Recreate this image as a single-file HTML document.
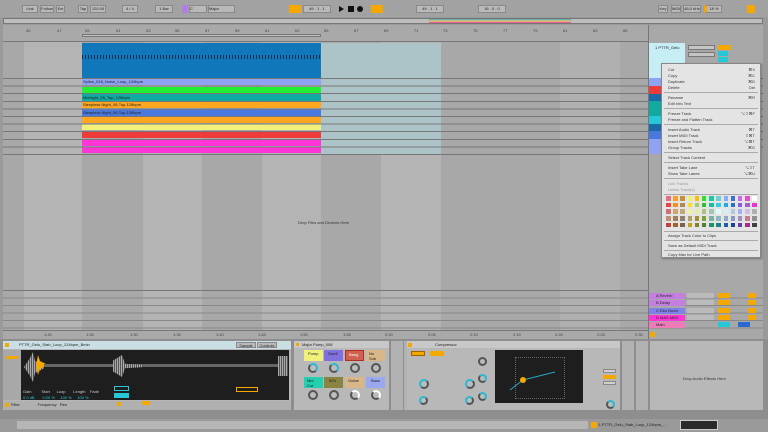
<!DOCTYPE html>
<html><head><meta charset="utf-8"><style>
*{margin:0;padding:0;box-sizing:border-box}
body{width:768px;height:432px;overflow:hidden;background:#9a9a9a;font-family:"Liberation Sans",sans-serif;font-size:4px;color:#222;position:relative}
.a{position:absolute}
.btn{position:absolute;background:#b9b9b9;border:1px solid #8a8a8a;font-size:4px;line-height:6px;text-align:center;height:8px}
.mi{position:absolute;left:6px;font-size:4px;color:#333}
.ms{position:absolute;right:5px;font-size:4px;color:#333}
.sep{position:absolute;left:2px;right:2px;height:1px;background:#aaa}
.knob{position:absolute;width:10px;height:10px;border-radius:50%;border:2px solid #555;background:#bcbcbc}
.kc{border-color:#2ab8d0 #2ab8d0 #555 #555}
.sw{display:grid;grid-template-columns:repeat(13,4.5px);column-gap:2.7px;row-gap:2.2px}
.sw i{display:block;width:4.5px;height:4.5px}
.wv{position:absolute;background:repeating-linear-gradient(90deg,#aaa 0 1px,#555 1px 2px)}
</style></head><body>
<div class="a" style="left:0;top:0;width:768px;height:17px;background:#a2a2a2"></div>
<div class="btn" style="left:22px;top:5px;width:16px">Link</div>
<div class="btn" style="left:40px;top:5px;width:14px">Follow</div>
<div class="btn" style="left:56px;top:5px;width:9px">Ext</div>
<div class="btn" style="left:78px;top:5px;width:10px">Tap</div>
<div class="btn" style="left:90px;top:5px;width:16px">120.00</div>
<div class="btn" style="left:122px;top:5px;width:16px">4 / 4</div>
<div class="btn" style="left:155px;top:5px;width:18px">1 Bar</div>
<div class="a" style="left:182px;top:5px;width:6px;height:8px;background:#b080e0"></div>
<div class="btn" style="left:189px;top:5px;width:18px;text-align:left">C</div>
<div class="btn" style="left:208px;top:5px;width:27px;text-align:left">Major</div>
<div class="a" style="left:289px;top:5px;width:12px;height:8px;background:#f5a800"></div>
<div class="btn" style="left:303px;top:5px;width:28px">49 . 1 . 1</div>
<div class="a" style="left:339px;top:6px;width:0;height:0;border-left:5px solid #111;border-top:3px solid transparent;border-bottom:3px solid transparent"></div>
<div class="a" style="left:348px;top:6px;width:6px;height:6px;background:#111"></div>
<div class="a" style="left:357px;top:6px;width:6px;height:6px;background:#111;border-radius:50%"></div>
<div class="a" style="left:371px;top:5px;width:12px;height:8px;background:#f5a800"></div>
<div class="btn" style="left:416px;top:5px;width:28px">49 . 1 . 1</div>
<div class="btn" style="left:478px;top:5px;width:28px">16 . 0 . 0</div>
<div class="btn" style="left:658px;top:5px;width:10px">Key</div>
<div class="btn" style="left:671px;top:5px;width:10px">MIDI</div>
<div class="btn" style="left:683px;top:5px;width:18px">48.0 kHz</div>
<div class="btn" style="left:704px;top:5px;width:18px;border-left:3px solid #f5a800">18 %</div>
<div class="a" style="left:747px;top:5px;width:8px;height:8px;background:#f5a800"></div>
<div class="a" style="left:3px;top:18px;width:760px;height:6px;background:#bdbdbd;border:1px solid #777"></div>
<div class="a" style="left:429px;top:19px;width:142px;height:4px;background:linear-gradient(#3aa0c0,#e8d070,#e040a0)"></div>
<div class="a" style="left:3px;top:25px;width:645px;height:307px;background:repeating-linear-gradient(90deg,#a8a8a8 0 21px,#b4b4b4 21px 79px,#a8a8a8 79px 140px,#b4b4b4 140px 199px,#a8a8a8 199px 259px,#b4b4b4 259px 318px,#a8a8a8 318px 378px,#b4b4b4 378px 438px,#a8a8a8 438px 557px,#b0b0b0 557px 617px,#a8a8a8 617px 645px)"></div>
<div class="a" style="left:3px;top:25px;width:645px;height:17px;background:#a9a9a9;border-bottom:1px solid #777"></div>
<div class="a" style="left:3px;top:28px;width:645px;font-size:4px;color:#444">
<span class="a" style="left:23px">45</span><span class="a" style="left:54px">47</span><span class="a" style="left:82px">49</span><span class="a" style="left:113px">51</span><span class="a" style="left:143px">53</span><span class="a" style="left:172px">55</span><span class="a" style="left:202px">57</span><span class="a" style="left:232px">59</span><span class="a" style="left:262px">61</span><span class="a" style="left:292px">63</span><span class="a" style="left:321px">65</span><span class="a" style="left:351px">67</span><span class="a" style="left:381px">69</span><span class="a" style="left:411px">71</span><span class="a" style="left:440px">73</span><span class="a" style="left:470px">75</span><span class="a" style="left:500px">77</span><span class="a" style="left:530px">79</span><span class="a" style="left:560px">81</span><span class="a" style="left:590px">83</span><span class="a" style="left:620px">85</span></div>
<div class="a" style="left:82px;top:34px;width:239px;height:3px;border:1px solid #777;background:#c0c0c0"></div>
<div class="a" style="left:321px;top:43px;width:120px;height:111px;background:#acc4c8"></div>
<div class="a" style="left:82px;top:43px;width:239px;height:35px;background:#1177bb"></div>
<div class="a" style="left:82px;top:55px;width:239px;height:4px;background:repeating-linear-gradient(90deg,#0a3050 0 1px,transparent 1px 3px)"></div>
<div class="a" style="left:82px;top:78px;width:239px;height:7px;background:#8fa3f2;font-size:4px;line-height:7px;padding-left:1px">Splice_018_Noise_Loop_124bpm</div>
<div class="a" style="left:82px;top:87px;width:239px;height:6px;background:#22ee33"></div>
<div class="a" style="left:82px;top:94px;width:239px;height:7px;background:#11aaa0;font-size:4px;line-height:7px;padding-left:1px">Midnight_05_Top_128bpm</div>
<div class="a" style="left:82px;top:101px;width:239px;height:7px;background:#ffa620;font-size:4px;line-height:7px;padding-left:1px">Sleepless Night_06-Top-128bpm</div>
<div class="a" style="left:82px;top:109px;width:239px;height:7px;background:#4a78dc;font-size:4px;line-height:7px;padding-left:1px">Sleepless Night_50-Top-128bpm</div>
<div class="a" style="left:82px;top:116px;width:239px;height:7px;background:#ffa620"></div>
<div class="a" style="left:82px;top:124px;width:239px;height:6px;background:#f2f27a"></div>
<div class="a" style="left:82px;top:131px;width:239px;height:7px;background:#ef3a3a"></div>
<div class="a" style="left:82px;top:139px;width:239px;height:7px;background:#ff35d8"></div>
<div class="a" style="left:82px;top:147px;width:239px;height:6px;background:#ff35d8"></div>
<div class="a" style="left:3px;top:78px;width:760px;height:76px;background:repeating-linear-gradient(#777 0 1px,transparent 1px 7.6px)"></div>
<div class="a" style="left:3px;top:154px;width:645px;height:1px;background:#777"></div>
<div class="a" style="left:298px;top:220px;font-size:4px;color:#333">Drop Files and Devices Here</div>
<div class="a" style="left:3px;top:290px;width:645px;height:1px;background:#777"></div>
<div class="a" style="left:3px;top:291px;width:645px;height:40px;background:repeating-linear-gradient(transparent 0 6.5px,#888 6.5px 7.5px)"></div>
<div class="a" style="left:3px;top:330px;width:645px;height:9px;background:#a9a9a9;border-top:1px solid #777"></div>
<div class="a" style="left:3px;top:332px;width:645px;font-size:4px;color:#444"><span class="a" style="left:41px">1:20</span><span class="a" style="left:83px">1:25</span><span class="a" style="left:127px">1:30</span><span class="a" style="left:170px">1:35</span><span class="a" style="left:213px">1:40</span><span class="a" style="left:255px">1:45</span><span class="a" style="left:297px">1:50</span><span class="a" style="left:340px">1:55</span><span class="a" style="left:382px">2:00</span><span class="a" style="left:425px">2:05</span><span class="a" style="left:467px">2:10</span><span class="a" style="left:510px">2:15</span><span class="a" style="left:552px">2:20</span><span class="a" style="left:594px">2:25</span><span class="a" style="left:632px">2:30</span></div>
<div class="a" style="left:648px;top:25px;width:115px;height:314px;background:#a8a8a8;border-left:1px solid #777"></div>
<div class="a" style="left:649px;top:78px;width:114px;height:76px;background:repeating-linear-gradient(#777 0 1px,transparent 1px 7.6px)"></div>
<div class="a" style="left:649px;top:291px;width:114px;height:40px;background:repeating-linear-gradient(transparent 0 6.5px,#888 6.5px 7.5px)"></div>
<div class="a" style="left:649px;top:43px;width:36px;height:35px;background:#c8eef5;font-size:4px;padding:2px 0 0 6px">1 PTTR_Gelu</div>
<div class="a" style="left:688px;top:45px;width:27px;height:5px;background:#c4c4c4;border:1px solid #777"></div>
<div class="a" style="left:688px;top:52px;width:27px;height:5px;background:#c4c4c4;border:1px solid #777"></div>
<div class="a" style="left:718px;top:45px;width:13px;height:5px;background:#f5a800"></div>
<div class="a" style="left:718px;top:51px;width:10px;height:5px;background:#26c8d8"></div>
<div class="a" style="left:718px;top:57px;width:10px;height:5px;background:#26c8d8"></div>
<div class="a" style="left:649px;top:78px;width:12px;height:76px;background:linear-gradient(#8fa3f2 0 8px,#ef3a3a 8px 16px,#1a6aa8 16px 23px,#11aaa0 23px 31px,#11aaa0 31px 38px,#26c8d8 38px 46px,#1a6aa8 46px 53px,#4a78dc 53px 61px,#8fa3f2 61px 69px,#8fa3f2 69px 76px)"></div>
<div class="a" style="left:649px;top:293px;width:36px;height:6px;background:#c47ee0;font-size:4px;padding-left:7px">A Reverb</div>
<div class="a" style="left:649px;top:300px;width:36px;height:6px;background:#c47ee0;font-size:4px;padding-left:7px">B Delay</div>
<div class="a" style="left:649px;top:308px;width:36px;height:6px;background:#8080ea;font-size:4px;padding-left:7px">C Eko Drum</div>
<div class="a" style="left:649px;top:315px;width:36px;height:6px;background:#ff35d8;font-size:4px;padding-left:7px">D MAX MIDI</div>
<div class="a" style="left:649px;top:322px;width:36px;height:6px;background:#ef7ab8;font-size:4px;padding-left:7px">Main</div>
<div class="a" style="left:687px;top:293px;width:27px;height:5px;background:#bbb"></div>
<div class="a" style="left:687px;top:300px;width:27px;height:5px;background:#bbb"></div>
<div class="a" style="left:687px;top:308px;width:27px;height:5px;background:#bbb"></div>
<div class="a" style="left:687px;top:315px;width:27px;height:5px;background:#bbb"></div>
<div class="a" style="left:718px;top:293px;width:12px;height:5px;background:#f5a800"></div>
<div class="a" style="left:718px;top:300px;width:12px;height:5px;background:#f5a800"></div>
<div class="a" style="left:718px;top:308px;width:12px;height:5px;background:#f5a800"></div>
<div class="a" style="left:718px;top:315px;width:12px;height:5px;background:#f5a800"></div>
<div class="a" style="left:718px;top:322px;width:12px;height:5px;background:#26c8d8"></div>
<div class="a" style="left:738px;top:322px;width:12px;height:5px;background:#2a6ad0"></div>
<div class="a" style="left:748px;top:293px;width:8px;height:5px;background:#f5a800"></div>
<div class="a" style="left:748px;top:300px;width:8px;height:5px;background:#f5a800"></div>
<div class="a" style="left:748px;top:308px;width:8px;height:5px;background:#f5a800"></div>
<div class="a" style="left:748px;top:315px;width:8px;height:5px;background:#f5a800"></div>
<div class="a" style="left:650px;top:332px;width:5px;height:5px;background:#f5a800"></div>
<div class="a" style="left:661px;top:63px;width:100px;height:195px;background:#e4e4e4;border:1px solid #888;box-shadow:1px 1px 2px rgba(0,0,0,.3)">
<div class="mi" style="top:3px">Cut</div><div class="ms" style="top:3px">⌘X</div>
<div class="mi" style="top:9px">Copy</div><div class="ms" style="top:9px">⌘C</div>
<div class="mi" style="top:15px">Duplicate</div><div class="ms" style="top:15px">⌘D</div>
<div class="mi" style="top:21px">Delete</div><div class="ms" style="top:21px">Del</div>
<div class="sep" style="top:28px"></div>
<div class="mi" style="top:31px">Rename</div><div class="ms" style="top:31px">⌘R</div>
<div class="mi" style="top:37px">Edit Info Text</div>
<div class="sep" style="top:44px"></div>
<div class="mi" style="top:47px">Freeze Track</div><div class="ms" style="top:47px">⌥⇧⌘F</div>
<div class="mi" style="top:53px">Freeze and Flatten Track</div>
<div class="sep" style="top:60px"></div>
<div class="mi" style="top:63px">Insert Audio Track</div><div class="ms" style="top:63px">⌘T</div>
<div class="mi" style="top:69px">Insert MIDI Track</div><div class="ms" style="top:69px">⇧⌘T</div>
<div class="mi" style="top:75px">Insert Return Track</div><div class="ms" style="top:75px">⌥⌘T</div>
<div class="mi" style="top:81px">Group Tracks</div><div class="ms" style="top:81px">⌘G</div>
<div class="sep" style="top:88px"></div>
<div class="mi" style="top:91px">Select Track Content</div>
<div class="sep" style="top:98px"></div>
<div class="mi" style="top:101px">Insert Take Lane</div><div class="ms" style="top:101px">⌥⇧T</div>
<div class="mi" style="top:107px">Show Take Lanes</div><div class="ms" style="top:107px">⌥⌘U</div>
<div class="sep" style="top:114px"></div>
<div class="mi" style="top:117px;color:#999">Link Tracks</div>
<div class="mi" style="top:123px;color:#999">Unlink Track(s)</div>
<div class="sep" style="top:130px"></div>
<div class="a sw" style="left:4px;top:132px">
<i style="background:#e07080"></i><i style="background:#f5a030"></i><i style="background:#c89030"></i><i style="background:#f0f070"></i><i style="background:#f5c000"></i><i style="background:#30e030"></i><i style="background:#20c8a0"></i><i style="background:#70d0d0"></i><i style="background:#80b0f0"></i><i style="background:#4070d0"></i><i style="background:#c070e0"></i><i style="background:#e050c0"></i><i style="background:#fff"></i>
<i style="background:#f04040"></i><i style="background:#f09020"></i><i style="background:#b08850"></i><i style="background:#f5e020"></i><i style="background:#a0d060"></i><i style="background:#30c030"></i><i style="background:#20b8a0"></i><i style="background:#30d0e0"></i><i style="background:#20a8e0"></i><i style="background:#3070c0"></i><i style="background:#8060e0"></i><i style="background:#a060d0"></i><i style="background:#f030d0"></i>
<i style="background:#d07070"></i><i style="background:#d0a070"></i><i style="background:#c0a870"></i><i style="background:#f0f0a0"></i><i style="background:#e0f0a0"></i><i style="background:#b0c080"></i><i style="background:#a0c8b0"></i><i style="background:#e0f8f8"></i><i style="background:#d0f0f8"></i><i style="background:#b0c8e0"></i><i style="background:#a0b0f0"></i><i style="background:#d0c0e0"></i><i style="background:#b0b0b0"></i>
<i style="background:#c09070"></i><i style="background:#a08060"></i><i style="background:#908070"></i><i style="background:#b0a070"></i><i style="background:#a09030"></i><i style="background:#80a040"></i><i style="background:#80b0a0"></i><i style="background:#90b8c0"></i><i style="background:#90a8c0"></i><i style="background:#8898c0"></i><i style="background:#a090c0"></i><i style="background:#c08090"></i><i style="background:#909090"></i>
<i style="background:#c04040"></i><i style="background:#a06030"></i><i style="background:#806050"></i><i style="background:#c0a020"></i><i style="background:#808030"></i><i style="background:#508030"></i><i style="background:#209070"></i><i style="background:#20808a"></i><i style="background:#2060a0"></i><i style="background:#204090"></i><i style="background:#6040a0"></i><i style="background:#a03080"></i><i style="background:#404040"></i>
</div>
<div class="sep" style="top:167px"></div>
<div class="mi" style="top:169px">Assign Track Color to Clips</div>
<div class="sep" style="top:176px"></div>
<div class="mi" style="top:179px">Save as Default MIDI Track</div>
<div class="sep" style="top:186px"></div>
<div class="mi" style="top:188px">Copy Max for Live Path</div>
</div>
<div class="a" style="left:0;top:339px;width:768px;height:81px;background:#8e8e8e"></div>
<div class="a" style="left:3px;top:341px;width:288px;height:69px;background:#b6b6b6"></div>
<div class="a" style="left:3px;top:341px;width:288px;height:8px;background:#c9dfe4;font-size:4px;line-height:8px;padding-left:16px">PTTR_Gelu_Stab_Loop_124bpm_Bmin</div>
<div class="a" style="left:5px;top:343px;width:4px;height:4px;background:#f5a800"></div>
<div class="a" style="left:236px;top:342px;width:20px;height:6px;background:#bbb;border:1px solid #888;font-size:4px;text-align:center">Sample</div>
<div class="a" style="left:257px;top:342px;width:20px;height:6px;background:#bbb;border:1px solid #888;font-size:4px;text-align:center">Controls</div>
<div class="a" style="left:3px;top:350px;width:18px;height:50px;background:#a8a8a8"></div>
<div class="a" style="left:6px;top:356px;width:12px;height:3px;background:#f5a800"></div>
<div class="a" style="left:21px;top:350px;width:268px;height:50px;background:#1e1e1e"></div>
<div class="wv" style="left:24px;top:352px;width:20px;height:30px;clip-path:polygon(0 50%,30% 20%,45% 0,55% 30%,100% 45%,100% 55%,55% 70%,45% 100%,30% 80%)"></div>
<div class="a" style="left:36px;top:355px;width:10px;height:20px;background:#f5a800;clip-path:polygon(0 50%,20% 0,40% 30%,100% 45%,100% 55%,40% 70%,20% 100%)"></div>
<div class="a" style="left:44px;top:364px;width:236px;height:3px;background:#666"></div>
<div class="wv" style="left:113px;top:355px;width:30px;height:22px;clip-path:polygon(0 25%,30% 0,40% 40%,100% 45%,100% 55%,40% 60%,30% 100%,0 75%)"></div>
<div class="wv" style="left:278px;top:356px;width:10px;height:20px"></div>
<div class="a" style="left:23px;top:389px;font-size:4px;color:#ccc">Gain &nbsp;&nbsp;&nbsp;&nbsp;&nbsp;&nbsp;&nbsp; Start &nbsp;&nbsp;&nbsp;&nbsp; Loop &nbsp;&nbsp;&nbsp;&nbsp;&nbsp; Length &nbsp;&nbsp; Fade</div>
<div class="a" style="left:23px;top:395px;font-size:4px;color:#26c8d8">0.0 dB &nbsp;&nbsp;&nbsp;&nbsp;&nbsp; 0.00 % &nbsp;&nbsp;&nbsp; 100 % &nbsp;&nbsp;&nbsp; 100 %</div>
<div class="a" style="left:114px;top:386px;width:15px;height:5px;border:1px solid #26c8d8"></div>
<div class="a" style="left:114px;top:393px;width:15px;height:5px;background:#26c8d8"></div>
<div class="a" style="left:236px;top:387px;width:22px;height:5px;border:1px solid #f5a800"></div>
<div class="a" style="left:3px;top:401px;width:288px;height:9px;background:#b0b0b0;font-size:4px;padding:1px 0 0 8px">Filter &nbsp;&nbsp;&nbsp;&nbsp;&nbsp;&nbsp;&nbsp;&nbsp;&nbsp;&nbsp;&nbsp;&nbsp;&nbsp;&nbsp; Frequency &nbsp; Res</div>
<div class="a" style="left:5px;top:403px;width:4px;height:4px;background:#f5a800"></div>
<div class="a" style="left:117px;top:402px;width:4px;height:4px;background:#f5a800"></div>
<div class="a" style="left:142px;top:401px;width:8px;height:4px;background:#f5a800"></div>
<div class="a" style="left:294px;top:341px;width:95px;height:69px;background:#b8b8b8"></div>
<div class="a" style="left:294px;top:341px;width:95px;height:7px;background:#c8c8c8;font-size:4px;line-height:7px;padding-left:8px">Major Pump_008</div>
<div class="a" style="left:296px;top:343px;width:3px;height:3px;background:#f5a800"></div>
<div class="a" style="left:304px;top:350px;width:19px;height:11px;background:#f0f07a;font-size:4px;padding:1px 4px">Pump</div>
<div class="a" style="left:324px;top:350px;width:19px;height:11px;background:#8070e0;font-size:4px;padding:1px 4px">Swell</div>
<div class="a" style="left:345px;top:350px;width:19px;height:11px;background:#d06050;border:1px solid #b03020;font-size:4px;padding:1px 3px;color:#fff">Bang</div>
<div class="a" style="left:366px;top:350px;width:19px;height:11px;background:#d8b888;font-size:4px;padding:1px 3px">No Sub</div>
<div class="a" style="left:304px;top:377px;width:19px;height:11px;background:#22d0b0;font-size:4px;padding:1px 3px">Mid Cut</div>
<div class="a" style="left:324px;top:377px;width:19px;height:11px;background:#8a8440;font-size:4px;padding:1px 5px">80's</div>
<div class="a" style="left:345px;top:377px;width:19px;height:11px;background:#d8b888;font-size:4px;padding:1px 3px">Guitar</div>
<div class="a" style="left:366px;top:377px;width:19px;height:11px;background:#9aa8f0;font-size:4px;padding:1px 5px">Bass</div>
<div class="knob kc" style="left:308px;top:363px"></div><div class="knob kc" style="left:329px;top:363px"></div><div class="knob" style="left:350px;top:363px"></div><div class="knob" style="left:371px;top:363px"></div>
<div class="knob" style="left:308px;top:390px"></div><div class="knob" style="left:329px;top:390px"></div><div class="knob" style="left:350px;top:390px;border-color:#fff #fff #555 #555"></div><div class="knob" style="left:371px;top:390px;border-color:#fff #fff #555 #555"></div>
<div class="a" style="left:391px;top:341px;width:12px;height:69px;background:#b2b2b2"></div>
<div class="a" style="left:404px;top:341px;width:12px;height:69px;background:#b2b2b2"></div>
<div class="a" style="left:407px;top:341px;width:213px;height:69px;background:#b8b8b8"></div>
<div class="a" style="left:407px;top:341px;width:213px;height:7px;background:#c8c8c8;font-size:4px;line-height:7px;padding-left:28px">Compressor</div>
<div class="a" style="left:408px;top:343px;width:4px;height:4px;background:#f5a800"></div>
<div class="a" style="left:411px;top:351px;width:14px;height:5px;background:#f5a800;border:1px solid #a06000"></div>
<div class="a" style="left:430px;top:351px;width:14px;height:5px;background:#f5a800"></div>
<div class="a" style="left:495px;top:350px;width:88px;height:53px;background:#1e1e1e"></div>
<div class="a" style="left:515px;top:357px;width:50px;height:42px;border:1px dotted #666"></div>
<svg class="a" style="left:495px;top:350px" width="88" height="53"><polyline points="15,40 28,30 60,22" fill="none" stroke="#26a8c0" stroke-width="1"/><circle cx="28" cy="30" r="3" fill="#f5a800"/></svg>
<div class="a" style="left:603px;top:369px;width:13px;height:4px;background:#cfcfcf;border:1px solid #888"></div>
<div class="a" style="left:603px;top:375px;width:13px;height:4px;background:#f5a800"></div>
<div class="a" style="left:603px;top:381px;width:13px;height:4px;background:#cfcfcf;border:1px solid #888"></div>
<div class="knob" style="left:419px;top:379px;border-color:#2ab8d0 #555 #555 #2ab8d0"></div>
<div class="knob" style="left:419px;top:396px;width:9px;height:9px;border-color:#2ab8d0 #555 #555 #2ab8d0"></div>
<div class="knob" style="left:465px;top:379px;border-color:#2ab8d0 #555 #555 #2ab8d0"></div>
<div class="knob" style="left:465px;top:396px;width:9px;height:9px;border-color:#2ab8d0 #555 #555 #2ab8d0"></div>
<div class="knob" style="left:478px;top:357px;width:9px;height:9px"></div>
<div class="knob kc" style="left:478px;top:374px;width:9px;height:9px"></div>
<div class="knob kc" style="left:478px;top:392px;width:9px;height:9px"></div>
<div class="knob kc" style="left:606px;top:400px;width:9px;height:9px"></div>
<div class="a" style="left:622px;top:341px;width:12px;height:69px;background:#b2b2b2"></div>
<div class="a" style="left:636px;top:341px;width:12px;height:69px;background:#b2b2b2"></div>
<div class="a" style="left:650px;top:341px;width:113px;height:69px;background:#b8b8b8"></div>
<div class="a" style="left:683px;top:376px;font-size:4px;color:#333">Drop Audio Effects Here</div>
<div class="a" style="left:0;top:419px;width:768px;height:13px;background:#9a9a9a"></div>
<div class="a" style="left:17px;top:421px;width:485px;height:8px;background:#b6b6b6"></div>
<div class="a" style="left:500px;top:421px;width:88px;height:8px;background:#b6b6b6"></div>
<div class="a" style="left:591px;top:421px;width:200px;font-size:4px;line-height:8px"><span style="display:inline-block;width:6px;height:6px;background:#f5a800;vertical-align:middle"></span> 1-PTTR_Gelu_Stab_Loop_124bpm_...</div>
<div class="a" style="left:680px;top:420px;width:38px;height:10px;background:#2a2a2a;border:1px solid #ccc"></div>
</body></html>
